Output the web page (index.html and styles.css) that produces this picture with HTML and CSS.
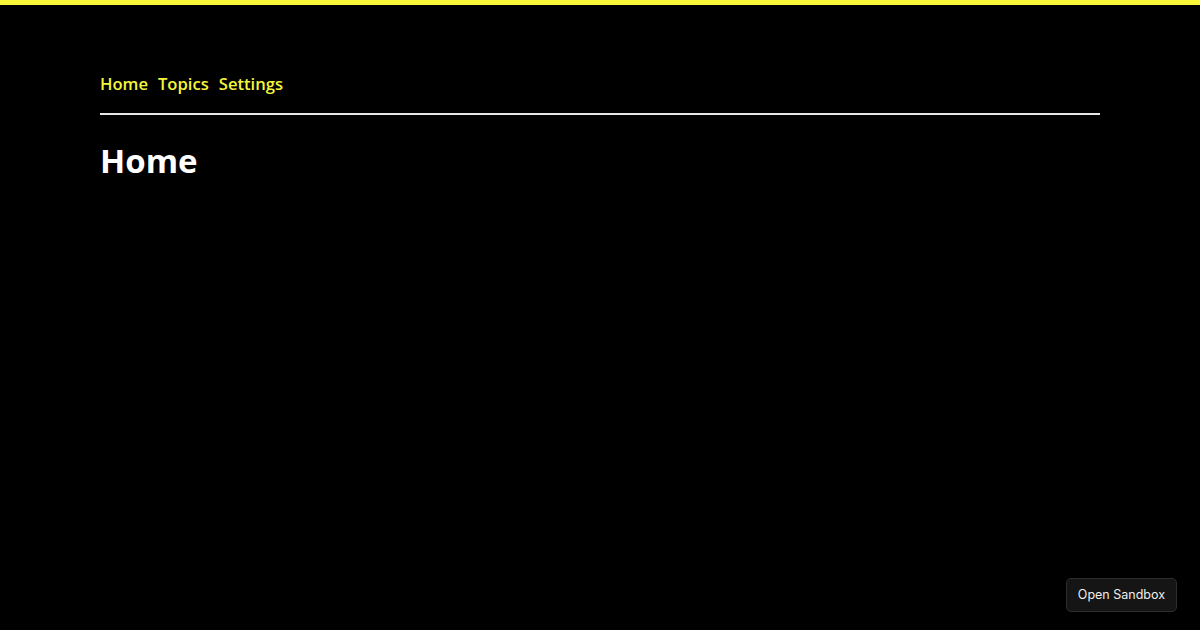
FILE: index.html
```html
<!DOCTYPE html>
<html>
<head>
<meta charset="utf-8">
<link rel="stylesheet" href="styles.css">
</head>
<body>
<div class="topbar"></div>
<div class="container">
  <nav class="nav">
    <a class="nav-link" href="#">Home</a>
    <a class="nav-link" href="#">Topics</a>
    <a class="nav-link" href="#">Settings</a>
  </nav>
  <hr class="divider">
  <h1 class="title">Home</h1>
</div>
<button class="sandbox-btn">Open Sandbox</button>
</body>
</html>
```
FILE: styles.css
```css
html, body {
  margin: 0;
  padding: 0;
  background: #000;
  height: 100%;
}
body {
  font-family: "Open Sans", "Lato", sans-serif;
  color: #fff;
}
.topbar {
  height: 5px;
  background: #f8f838;
}
.container {
  width: 1000px;
  margin: 0 auto;
  padding-top: 63px;
}
.nav {
  display: flex;
  gap: 10px;
  height: 30px;
  align-items: center;
}
.nav-link {
  color: #f5f53a;
  text-decoration: none;
  font-size: 16.6px;
  font-weight: 600;
}
.divider {
  border: none;
  height: 2px;
  background: #e6e6e6;
  margin: 15px 0 0 0;
}
.title {
  margin: 26px 0 0 0;
  font-size: 33px;
  font-weight: 700;
  line-height: 40px;
}
.sandbox-btn {
  position: fixed;
  right: 23px;
  bottom: 18px;
  height: 34px;
  padding: 0 11px 1px;
  background: #151515;
  border: 1px solid #2e2e2e;
  border-radius: 5px;
  color: #eee;
  font-family: "Inter", sans-serif;
  font-size: 12.5px;
}
```
